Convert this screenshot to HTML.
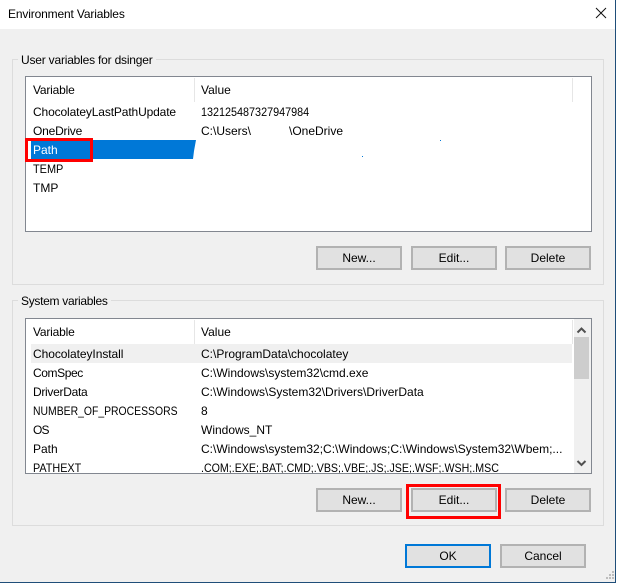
<!DOCTYPE html>
<html><head><meta charset="utf-8"><style>
html,body{margin:0;padding:0;background:#fff}
#w{position:relative;width:617px;height:583px;overflow:hidden;background:#fff;font:12px/16px "Liberation Sans",sans-serif;color:#000}
#w div{position:absolute;box-sizing:border-box}
.t{white-space:nowrap;height:16px;transform-origin:0 0}
.g{border:2px solid #dcdcdc;border-width:1.5px}
.l{background:#fff;border:1px solid #828790;outline:0}
.b{background:#e1e1e1;border:2px solid #b2b2b2;text-align:center;line-height:20px;width:86px;height:24px}
.r{border:3px solid #f00}
.s{background:#e6e6e6;width:1px}
</style></head><body><div id="w">
<div style="left:0;top:29px;width:615px;height:553px;background:#f0f0f0"></div>
<div style="left:615px;top:0;width:1px;height:583px;background:#1f4e79"></div>
<div style="left:0;top:582px;width:616px;height:1px;background:#1f4e79"></div>
<div class="t" style="left:8px;top:6px;letter-spacing:-.15px">Environment Variables</div>
<svg style="position:absolute;left:595px;top:7px" width="12" height="12"><path d="M1 1L11 11M11 1L1 11" stroke="#111" stroke-width="1" fill="none"/></svg>

<div class="g" style="left:12px;top:59px;width:592px;height:226px"></div>
<div style="left:18px;top:54px;width:138px;height:12px;background:#f0f0f0"></div>
<div class="t" style="left:21px;top:52px;letter-spacing:-.2px">User variables for dsinger</div>
<div class="l" style="left:25px;top:76px;width:567px;height:156px"></div>
<div class="s" style="left:194px;top:78px;height:24px"></div>
<div class="s" style="left:572px;top:78px;height:24px"></div>
<div class="t" style="left:33px;top:82px;letter-spacing:-.2px">Variable</div>
<div class="t" style="left:201px;top:82px">Value</div>
<div class="t" style="left:33px;top:104px;letter-spacing:-.13px">ChocolateyLastPathUpdate</div>
<div class="t" style="left:201px;top:104px;transform:scaleX(.9)">132125487327947984</div>
<div class="t" style="left:33px;top:123px;letter-spacing:-.2px">OneDrive</div>
<div class="t" style="left:201px;top:123px">C:\Users\</div>
<div class="t" style="left:289px;top:123px">\OneDrive</div>
<svg style="position:absolute;left:31px;top:140px" width="165" height="19"><path d="M0 0H165L163 11L162 19H0Z" fill="#0078d7"/></svg>
<div class="t" style="left:33px;top:142px;color:#fff">Path</div>
<div class="t" style="left:33px;top:161px;transform:scaleX(.91)">TEMP</div>
<div class="t" style="left:33px;top:180px">TMP</div>
<div class="r" style="left:25px;top:138px;width:68px;height:24px"></div>
<div style="left:440px;top:140px;width:1px;height:1px;background:#0078d7"></div>
<div style="left:362px;top:156px;width:1px;height:1px;background:#0078d7"></div>
<div class="b" style="left:316px;top:246px">New...</div>
<div class="b" style="left:411px;top:246px">Edit...</div>
<div class="b" style="left:505px;top:246px">Delete</div>

<div class="g" style="left:12px;top:300px;width:592px;height:226px"></div>
<div style="left:18px;top:295px;width:93px;height:12px;background:#f0f0f0"></div>
<div class="t" style="left:21px;top:293px;letter-spacing:-.3px">System variables</div>
<div class="l" style="left:25px;top:318px;width:567px;height:156px;overflow:hidden">
<div style="left:5px;top:25px;width:541px;height:19px;background:#f0f0f0"></div>
<div class="s" style="left:168px;top:1px;height:24px"></div>
<div class="s" style="left:546px;top:1px;height:24px"></div>
<div class="t" style="left:7px;top:5px;letter-spacing:-.2px">Variable</div>
<div class="t" style="left:175px;top:5px">Value</div>
<div class="t" style="left:7px;top:27px;letter-spacing:-.06px">ChocolateyInstall</div>
<div class="t" style="left:175px;top:27px">C:\ProgramData\chocolatey</div>
<div class="t" style="left:7px;top:46px;letter-spacing:-.4px">ComSpec</div>
<div class="t" style="left:175px;top:46px">C:\Windows\system32\cmd.exe</div>
<div class="t" style="left:7px;top:65px;letter-spacing:-.3px">DriverData</div>
<div class="t" style="left:175px;top:65px">C:\Windows\System32\Drivers\DriverData</div>
<div class="t" style="left:7px;top:84px;transform:scaleX(.867)">NUMBER_OF_PROCESSORS</div>
<div class="t" style="left:175px;top:84px">8</div>
<div class="t" style="left:7px;top:103px;letter-spacing:-.8px">OS</div>
<div class="t" style="left:175px;top:103px">Windows_NT</div>
<div class="t" style="left:7px;top:122px">Path</div>
<div class="t" style="left:175px;top:122px">C:\Windows\system32;C:\Windows;C:\Windows\System32\Wbem;...</div>
<div class="t" style="left:7px;top:141px;transform:scaleX(.9)">PATHEXT</div>
<div class="t" style="left:175px;top:141px;transform:scaleX(.887)">.COM;.EXE;.BAT;.CMD;.VBS;.VBE;.JS;.JSE;.WSF;.WSH;.MSC</div>
<div style="left:548px;top:0;width:17px;height:154px;background:#f0f0f0"></div>
<div style="left:548px;top:18px;width:15px;height:42px;background:#cdcdcd"></div>
<svg style="position:absolute;left:548px;top:5px" width="15" height="145"><path d="M3.500 8.500L7.500 4.500L11.500 8.500M3.500 137L7.500 141L11.500 137" stroke="#505050" stroke-width="2" fill="none"/></svg>
</div>
<div class="b" style="left:316px;top:488px">New...</div>
<div class="b" style="left:411px;top:488px">Edit...</div>
<div class="b" style="left:505px;top:488px">Delete</div>
<div class="r" style="left:406px;top:484px;width:95px;height:35px"></div>

<div class="b" style="left:405px;top:544px;border-color:#0078d7">OK</div>
<div class="b" style="left:500px;top:544px">Cancel</div>
<svg style="position:absolute;left:604px;top:571px" width="11" height="11" fill="#bdbdbd"><path d="M8 0h2v2H8zM5 3h2v2H5zM8 3h2v2H8zM2 6h2v2H2zM5 6h2v2H5zM8 6h2v2H8z"/></svg>
</div></body></html>
